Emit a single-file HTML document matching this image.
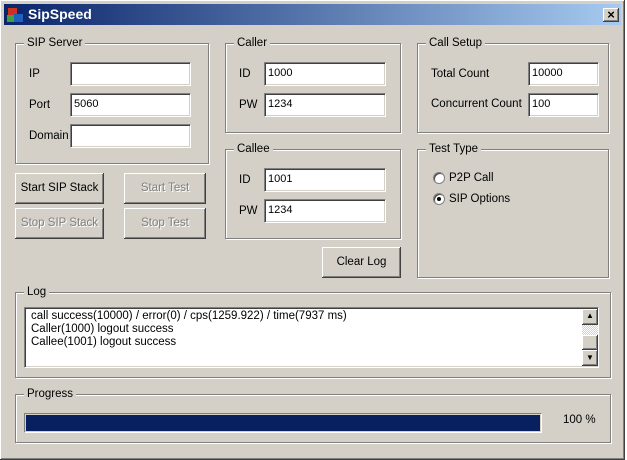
<!DOCTYPE html>
<html><head><style>
*{margin:0;padding:0;box-sizing:border-box}
body{width:627px;height:460px;background:#fff;font:11px "Liberation Sans",Tahoma,sans-serif;color:#000;position:relative;overflow:hidden}
.win{position:absolute;left:0;top:0;width:625px;height:460px;background:#d4d0c8;box-shadow:inset -1px -1px #404040,inset 1px 1px #fff,inset -2px -2px #808080}
.title{position:absolute;left:4px;top:4px;width:617px;height:21px;background:linear-gradient(90deg,#0a246a,#a6caf0);color:#fff;font-weight:bold;font-size:14px;line-height:21px;padding-left:24px}
.close{position:absolute;left:603px;top:8px;width:16px;height:14px;background:#d4d0c8;box-shadow:inset -1px -1px #404040,inset 1px 1px #fff,inset -2px -2px #808080;font-size:13px;line-height:13px;text-align:center;font-weight:bold;color:#000}
.g{position:absolute;border:1px solid #808080;box-shadow:1px 1px #fff,inset 1px 1px #fff}
.gl{position:absolute;top:-8px;left:8px;background:#d4d0c8;padding:0 3px;line-height:14px;font-size:11.5px}
.in{position:absolute;background:#fff;border:1px solid;border-color:#808080 #fff #fff #808080;box-shadow:inset 1px 1px #404040,inset -1px -1px #d4d0c8;padding:3px 3px;line-height:14px}
.l{position:absolute;line-height:14px;font-size:11.5px}
.b{position:absolute;background:#d4d0c8;box-shadow:inset -1px -1px #404040,inset 1px 1px #fff,inset -2px -2px #808080;text-align:center;line-height:31px;font-size:11.5px}
.d{color:#808080;text-shadow:1px 1px #fff}
.r{position:absolute;width:12px;height:12px;border-radius:50%;background:#fff;border:1px solid #808080;box-shadow:inset 1px 1px #404040}
</style></head><body>
<div class="win">
<div class="title">SipSpeed
<svg style="position:absolute;left:2px;top:2px" width="18" height="17"><rect x="2" y="2" width="9" height="8" fill="#d03020"/><rect x="1" y="9" width="8" height="7" fill="#40a040"/><rect x="8" y="8" width="9" height="8" fill="#2060c0"/></svg></div>
<div class="close">×</div>

<div class="g" style="left:15px;top:43px;width:194px;height:121px"><span class="gl">SIP Server</span></div>
<div class="l" style="left:29px;top:67px">IP</div>
<div class="l" style="left:29px;top:98px">Port</div>
<div class="l" style="left:29px;top:129px">Domain</div>
<div class="in" style="left:70px;top:62px;width:121px;height:24px"></div>
<div class="in" style="left:70px;top:93px;width:121px;height:24px">5060</div>
<div class="in" style="left:70px;top:124px;width:121px;height:24px"></div>

<div class="g" style="left:225px;top:43px;width:176px;height:90px"><span class="gl">Caller</span></div>
<div class="l" style="left:239px;top:67px">ID</div>
<div class="l" style="left:239px;top:98px">PW</div>
<div class="in" style="left:264px;top:62px;width:122px;height:24px">1000</div>
<div class="in" style="left:264px;top:93px;width:122px;height:24px">1234</div>

<div class="g" style="left:417px;top:43px;width:192px;height:90px"><span class="gl">Call Setup</span></div>
<div class="l" style="left:431px;top:67px">Total Count</div>
<div class="l" style="left:431px;top:97px">Concurrent Count</div>
<div class="in" style="left:528px;top:62px;width:71px;height:24px">10000</div>
<div class="in" style="left:528px;top:93px;width:71px;height:24px">100</div>

<div class="g" style="left:225px;top:149px;width:176px;height:90px"><span class="gl">Callee</span></div>
<div class="l" style="left:239px;top:173px">ID</div>
<div class="l" style="left:239px;top:204px">PW</div>
<div class="in" style="left:264px;top:168px;width:122px;height:24px">1001</div>
<div class="in" style="left:264px;top:199px;width:122px;height:24px">1234</div>

<div class="g" style="left:417px;top:149px;width:192px;height:129px"><span class="gl">Test Type</span></div>
<div class="r" style="left:433px;top:172px"></div><div class="l" style="left:449px;top:171px">P2P Call</div>
<div class="r" style="left:433px;top:193px"><div style="position:absolute;left:3px;top:3px;width:4px;height:4px;background:#000;border-radius:50%"></div></div><div class="l" style="left:449px;top:192px">SIP Options</div>

<div class="b" style="left:15px;top:173px;width:89px;height:31px">Start SIP Stack</div>
<div class="b d" style="left:124px;top:173px;width:82px;height:31px">Start Test</div>
<div class="b d" style="left:15px;top:208px;width:89px;height:31px">Stop SIP Stack</div>
<div class="b d" style="left:124px;top:208px;width:82px;height:31px">Stop Test</div>
<div class="b" style="left:322px;top:247px;width:79px;height:31px">Clear Log</div>

<div class="g" style="left:15px;top:292px;width:596px;height:86px"><span class="gl">Log</span></div>
<div class="in" style="left:24px;top:307px;width:575px;height:61px;padding:2px 6px;line-height:13px;font-size:11.5px">call success(10000) / error(0) / cps(1259.922) / time(7937 ms)<br>Caller(1000) logout success<br>Callee(1001) logout success</div>
<div style="position:absolute;left:582px;top:309px;width:16px;height:57px;background:repeating-conic-gradient(#fff 0 25%,#d4d0c8 0 50%) 0 0/2px 2px"></div>
<div class="b" style="left:582px;top:309px;width:16px;height:16px;line-height:14px;font-size:8px">▲</div>
<div class="b" style="left:582px;top:335px;width:16px;height:15px"></div>
<div class="b" style="left:582px;top:350px;width:16px;height:16px;line-height:16px;font-size:8px">▼</div>

<div class="g" style="left:15px;top:394px;width:596px;height:49px"><span class="gl">Progress</span></div>
<div style="position:absolute;left:24px;top:413px;width:518px;height:20px;border:1px solid;border-color:#808080 #fff #fff #808080;padding:1px"><div style="width:100%;height:100%;background:#082060"></div></div>
<div class="l" style="left:563px;top:413px">100 %</div>
</div>
</body></html>
